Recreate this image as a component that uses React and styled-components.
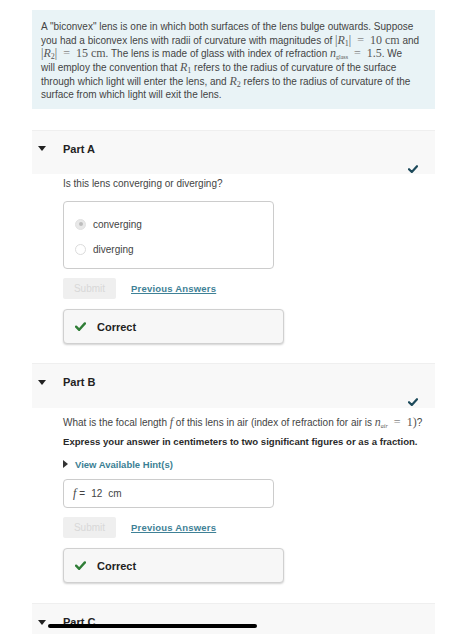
import React from "react";
import styled, { createGlobalStyle } from "styled-components";

const GlobalStyle = createGlobalStyle`
  html, body {
    margin: 0;
    padding: 0;
    background: #ffffff;
  }
  body {
    font-family: "Liberation Sans", Arial, sans-serif;
    color: #333333;
  }
`;

const Page = styled.div`
  width: 474px;
  height: 634px;
  overflow: hidden;
  padding: 10px 39px 0 32px;
  box-sizing: border-box;
`;

const Intro = styled.div`
  background: #e9f3f6;
  padding: 10px 9px 7px 9px;
  font-size: 10px;
  line-height: 13.7px;
  color: #444444;
`;

const Line = styled.span`
  display: block;
  height: 13.7px;
  white-space: nowrap;
`;

const Math = styled.span`
  font-family: "Liberation Serif", "Times New Roman", serif;
  font-size: 12px;
  line-height: 10px;
  color: #555555;
  white-space: nowrap;
`;

const Var = styled.i`
  font-style: italic;
`;

const Sub = styled.sub`
  font-size: ${(p) => (p.$small ? 6 : 8)}px;
  line-height: 0;
  vertical-align: -2px;
  font-style: ${(p) => (p.$italic ? "italic" : "normal")};
`;

const Eq = styled.span`
  color: #888888;
  margin: 0 6px;
`;

const Part = styled.section`
  margin-top: ${(p) => p.$top}px;
`;

const PartHeader = styled.div`
  position: relative;
  height: ${(p) => p.$height}px;
  background: #f8f8f8;
  border-top: 1px solid #efefef;
  padding: 11px 17px 0 6px;
  box-sizing: border-box;
  display: flex;
  flex-direction: column;
`;

const TitleRow = styled.div`
  display: flex;
  align-items: center;
  gap: 17px;
  height: 14px;
`;

const Title = styled.h3`
  margin: 0;
  font-size: 11px;
  font-weight: 700;
  color: #222222;
`;

const DoneRow = styled.div`
  display: flex;
  justify-content: flex-end;
  margin-top: 9px;
  height: 10px;
`;

const Redaction = styled.div`
  position: absolute;
  left: 16px;
  top: 20px;
  width: 209px;
  height: 4px;
  border-radius: 2px;
  background: #000000;
`;

const PartBody = styled.div`
  padding-left: 31px;
`;

const Question = styled.p`
  margin: ${(p) => p.$top}px 0 0;
  font-size: 10px;
  line-height: 14px;
  height: 14px;
  color: #444444;
  white-space: nowrap;
`;

const Instruction = styled.p`
  margin: 5px 0 0;
  font-size: 9.6px;
  font-weight: 700;
  line-height: 14px;
  color: #2a2a2a;
  white-space: nowrap;
`;

const ChoiceBox = styled.div`
  margin-top: 10px;
  width: 211px;
  height: 68px;
  box-sizing: border-box;
  border: 1px solid #cccccc;
  border-radius: 4px;
  padding: 15px 11px 0;
  display: flex;
  flex-direction: column;
  gap: 11px;
`;

const Choice = styled.label`
  display: flex;
  align-items: center;
  gap: 7px;
  height: 14px;
  font-size: 10px;
  color: #444444;
`;

const Radio = styled.span`
  width: 11px;
  height: 11px;
  box-sizing: border-box;
  border-radius: 50%;
  border: 1px solid ${(p) => (p.$checked ? "#e2e2e2" : "#dcdcdc")};
  background: ${(p) => (p.$checked ? "#e8e8e8" : "#ffffff")};
  display: flex;
  align-items: center;
  justify-content: center;
  &::after {
    content: "";
    width: 4px;
    height: 4px;
    border-radius: 50%;
    background: ${(p) => (p.$checked ? "#bdbdbd" : "transparent")};
  }
`;

const ActionRow = styled.div`
  margin-top: 9px;
  display: flex;
  align-items: center;
  gap: 15px;
  height: 21px;
`;

const SubmitButton = styled.button`
  width: 53px;
  height: 21px;
  border: none;
  border-radius: 2px;
  background: #efefef;
  color: #d8d8d8;
  font-family: inherit;
  font-size: 10px;
  padding: 0;
`;

const PrevLink = styled.a`
  font-size: 9.5px;
  font-weight: 700;
  color: #3f8196;
  text-decoration: underline;
  letter-spacing: 0.2px;
`;

const CorrectBox = styled.div`
  margin-top: 10px;
  width: 221px;
  height: 35px;
  box-sizing: border-box;
  border: 1px solid #d0d0d0;
  border-radius: 4px;
  background: #f7f7f7;
  box-shadow: 0 1px 2px rgba(0, 0, 0, 0.18);
  display: flex;
  align-items: center;
  gap: 11px;
  padding-left: 11px;
  font-size: 11px;
  font-weight: 700;
  color: #222222;
`;

const HintRow = styled.div`
  margin-top: 8px;
  display: flex;
  align-items: center;
  gap: 7px;
  height: 14px;
  font-size: 9.5px;
  font-weight: 700;
  color: #3b7f94;
`;

const AnswerBox = styled.div`
  margin-top: 8px;
  width: 211px;
  height: 29px;
  box-sizing: border-box;
  border: 1px solid #cccccc;
  border-radius: 4px;
  padding-left: 9px;
  display: flex;
  align-items: center;
  font-size: 10px;
  color: #444444;
`;

const AnswerVar = styled.span`
  font-family: "Liberation Serif", serif;
  font-style: italic;
  font-size: 12px;
  margin-right: 3px;
`;

const Spaced = styled.span`
  margin-left: ${(p) => p.$left}px;
`;

const Caret = ({ dir = "down" }) =>
  dir === "down" ? (
    <svg width="8" height="5" viewBox="0 0 8 5">
      <polygon points="0,0 8,0 4,5" fill="#222" />
    </svg>
  ) : (
    <svg width="5" height="8" viewBox="0 0 5 8">
      <polygon points="0,0 5,4 0,8" fill="#333" />
    </svg>
  );

const Tick = ({ color, w = 10, h = 8 }) => (
  <svg width={w} height={h} viewBox="0 0 10 8">
    <path
      d="M1 4.2 L3.8 7 L9 1.2"
      fill="none"
      stroke={color}
      strokeWidth="2.2"
      strokeLinecap="round"
      strokeLinejoin="round"
    />
  </svg>
);

const Header = ({ title, done, height = 44, redacted }) => (
  <PartHeader $height={height}>
    <TitleRow>
      <Caret />
      <Title>{title}</Title>
    </TitleRow>
    {done && (
      <DoneRow>
        <Tick color="#1d4a5b" />
      </DoneRow>
    )}
    {redacted && <Redaction />}
  </PartHeader>
);

const Actions = () => (
  <ActionRow>
    <SubmitButton disabled>Submit</SubmitButton>
    <PrevLink>Previous Answers</PrevLink>
  </ActionRow>
);

const Correct = () => (
  <CorrectBox>
    <Tick color="#2f7d36" w={11} h={9} />
    Correct
  </CorrectBox>
);

const R = ({ n }) => (
  <Math>
    <Var>R</Var>
    <Sub>{n}</Sub>
  </Math>
);

export default function App() {
  return (
    <>
      <GlobalStyle />
      <Page>
        <Intro>
          <Line>
            A "biconvex" lens is one in which both surfaces of the lens bulge
            outwards. Suppose
          </Line>
          <Line>
            you had a biconvex lens with radii of curvature with magnitudes of{" "}
            <Math>
              |<Var>R</Var>
              <Sub>1</Sub>|<Eq>=</Eq>10 cm
            </Math>{" "}
            and
          </Line>
          <Line>
            <Math>
              |<Var>R</Var>
              <Sub>2</Sub>|<Eq>=</Eq>15 cm
            </Math>
            . The lens is made of glass with index of refraction{" "}
            <Math>
              <Var>n</Var>
              <Sub $small>glass</Sub>
              <Eq>=</Eq>1.5
            </Math>
            . We
          </Line>
          <Line>
            will employ the convention that <R n="1" /> refers to the radius of
            curvature of the surface
          </Line>
          <Line>
            through which light will enter the lens, and <R n="2" /> refers to
            the radius of curvature of the
          </Line>
          <Line>surface from which light will exit the lens.</Line>
        </Intro>

        <Part $top={21}>
          <Header title="Part A" done height={44} />
          <PartBody>
            <Question $top={3}>Is this lens converging or diverging?</Question>
            <ChoiceBox>
              <Choice>
                <Radio $checked />
                converging
              </Choice>
              <Choice>
                <Radio />
                diverging
              </Choice>
            </ChoiceBox>
            <Actions />
            <Correct />
          </PartBody>
        </Part>

        <Part $top={19}>
          <Header title="Part B" done height={45} />
          <PartBody>
            <Question $top={8}>
              What is the focal length{" "}
              <Math>
                <Var>f</Var>
              </Math>{" "}
              of this lens in air (index of refraction for air is{" "}
              <Math>
                <Var>n</Var>
                <Sub $small $italic>air</Sub>
                <Eq>=</Eq>1)
              </Math>
              ?
            </Question>
            <Instruction>
              Express your answer in centimeters to two significant figures or
              as a fraction.
            </Instruction>
            <HintRow>
              <Caret dir="right" />
              View Available Hint(s)
            </HintRow>
            <AnswerBox>
              <AnswerVar>f</AnswerVar>=<Spaced $left={6}>12</Spaced>
              <Spaced $left={6}>cm</Spaced>
            </AnswerBox>
            <Actions />
            <Correct />
          </PartBody>
        </Part>

        <Part $top={20}>
          <Header title="Part C" height={44} redacted />
        </Part>
      </Page>
    </>
  );
}
